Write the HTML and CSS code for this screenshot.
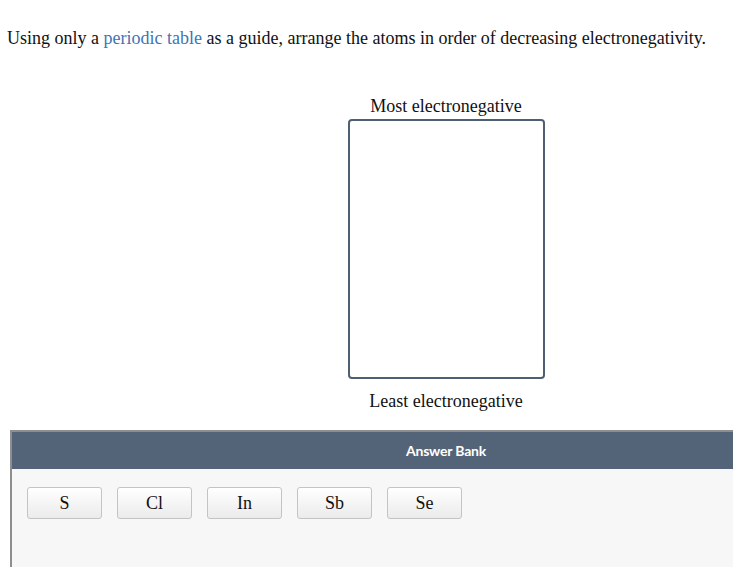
FILE: index.html
```html
<!DOCTYPE html>
<html lang="en">
<head>
<meta charset="utf-8">
<title>Electronegativity ranking</title>
<link rel="stylesheet" href="styles.css">
</head>
<body>
  <p class="question">Using only a <a class="link" href="#">periodic table</a> as a guide, arrange the atoms in order of decreasing electronegativity.</p>

  <div class="workspace">
    <div class="ranking">
      <div class="rank-label">Most electronegative</div>
      <div class="drop-zone"></div>
      <div class="rank-label rank-label--bottom">Least electronegative</div>
    </div>

    <div class="bank">
      <div class="bank-header">Answer Bank</div>
      <div class="bank-body">
        <button class="chip">S</button>
        <button class="chip">Cl</button>
        <button class="chip">In</button>
        <button class="chip">Sb</button>
        <button class="chip">Se</button>
      </div>
    </div>
  </div>
</body>
</html>
```

FILE: styles.css
```css
html, body {
  margin: 0;
  padding: 0;
  background: #ffffff;
  overflow: hidden;
}

body {
  font-family: "Liberation Serif", "Times New Roman", serif;
  color: #111111;
}

.question {
  margin: 0;
  padding: 27px 0 0 7px;
  font-size: 18px;
  line-height: 22px;
  white-space: nowrap;
}

.link {
  color: #3f73b5;
  text-decoration: none;
}

.workspace {
  margin-left: 10px;
  width: 872px;
}

.ranking {
  display: flex;
  flex-direction: column;
  align-items: center;
  padding-top: 47px;
}

.rank-label {
  font-size: 18px;
  line-height: 20px;
  height: 20px;
  margin-bottom: 3px;
}

.rank-label--bottom {
  margin: 12px 0 0;
}

.drop-zone {
  box-sizing: border-box;
  width: 197px;
  height: 260px;
  border: 2px solid #4f5f73;
  border-radius: 4px;
  background: #ffffff;
}

.bank {
  margin-top: 19px;
  border-top: 2px solid #8e8e8e;
  border-left: 2px solid #8e8e8e;
}

.bank-header {
  height: 37px;
  background: #536478;
  color: #ffffff;
  font-family: Lato, "Open Sans", sans-serif;
  font-weight: 700;
  font-size: 14px;
  line-height: 37px;
  text-align: center;
  letter-spacing: -0.2px;
  padding-right: 2px;
}

.bank-body {
  background: #f7f7f7;
  height: 120px;
  display: flex;
  gap: 15px;
  padding: 18px 0 0 15px;
  box-sizing: border-box;
}

.chip {
  box-sizing: border-box;
  width: 75px;
  height: 32px;
  border: 1px solid #c4c4c4;
  border-radius: 3px;
  background: linear-gradient(#ffffff, #ebebeb);
  font-family: "Liberation Serif", "Times New Roman", serif;
  font-size: 18px;
  color: #111111;
  padding: 0;
  cursor: pointer;
}
```
